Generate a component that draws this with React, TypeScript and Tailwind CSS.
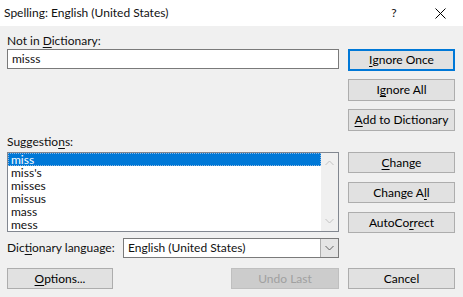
import React from "react";

const F = { fontFamily: 'Lato, "Noto Sans", sans-serif' };

function U({ children }: { children: React.ReactNode }) {
  return <span className="underline underline-offset-[2px] decoration-[1px]">{children}</span>;
}

function Btn({
  children,
  def,
  disabled,
  className = "",
}: {
  children: React.ReactNode;
  def?: boolean;
  disabled?: boolean;
  className?: string;
}) {
  const base = "flex items-center justify-center h-[21px] leading-none whitespace-nowrap";
  const look = def
    ? "bg-[#e1e1e1] border-2 border-[#0078d7] text-black"
    : disabled
    ? "bg-[#cccccc] border border-[#bfbfbf] text-[#a0a0a0]"
    : "bg-[#e1e1e1] border border-[#adadad] text-black";
  return <div className={`${base} ${look} ${className}`}>{children}</div>;
}

function Chevron({ up }: { up?: boolean }) {
  return (
    <svg width="9" height="6" viewBox="0 0 9 6">
      <path
        d={up ? "M0.5 5 L4.5 1 L8.5 5" : "M0.5 1 L4.5 5 L8.5 1"}
        fill="none"
        stroke="#c2c2c2"
        strokeWidth="1"
      />
    </svg>
  );
}

export default function App() {
  const items = ["miss", "miss's", "misses", "missus", "mass", "mess"];
  return (
    <div className="w-[463px] h-[297px] bg-[#f0f0f0] text-[#111] overflow-hidden text-[12px] whitespace-nowrap" style={F}>
      {/* Title bar */}
      <div className="h-[26px] bg-white flex items-center justify-between">
        <span className="pl-[4px] leading-none">Spelling: English (United States)</span>
        <div className="flex items-center h-full">
          <span className="w-[46px] text-center leading-none">?</span>
          <span className="w-[46px] flex justify-center">
            <svg width="11" height="11" viewBox="0 0 11 11">
              <path d="M0.5 0.5 L10.5 10.5 M10.5 0.5 L0.5 10.5" stroke="#000" strokeWidth="1" />
            </svg>
          </span>
        </div>
      </div>

      {/* Body */}
      <div className="px-[7px]">
        <div className="flex gap-[9px]">
          {/* Left column */}
          <div className="w-[332px] flex flex-col">
            <div className="mt-[7px] h-[16px] leading-[16px]">
              Not in <U>D</U>ictionary:
            </div>
            <div className="h-[20px] bg-white border border-[#7a7a7a] flex items-center pl-[4px]">
              misss
            </div>
            <div className="mt-[65px] h-[16px] leading-[16px]">
              Suggestio<U>n</U>s:
            </div>
            <div className="mt-[2px] h-[80px] bg-white border border-[#828790] flex">
              <div className="flex-1 flex flex-col">
                {items.map((it, i) => (
                  <div
                    key={it}
                    className={
                      i === 0
                        ? "h-[13px] leading-[13px] pl-[3px] bg-[#0078d7] text-white outline outline-1 outline-dotted outline-[#8fb8e0] -outline-offset-1"
                        : "h-[13px] leading-[13px] pl-[3px]"
                    }
                  >
                    {it}
                  </div>
                ))}
              </div>
              <div className="w-[17px] bg-[#f0f0f0] flex flex-col items-center justify-between py-[7px]">
                <Chevron up />
                <Chevron />
              </div>
            </div>
          </div>

          {/* Right column */}
          <div className="w-[107px] flex flex-col">
            <div className="mt-[23px] flex flex-col gap-[8px]">
              <Btn def className="h-[22px]">
                <U>I</U>gnore Once
              </Btn>
              <Btn className="h-[22px]">
                I<U>g</U>nore All
              </Btn>
              <Btn className="h-[22px]">
                <U>A</U>dd to Dictionary
              </Btn>
            </div>
            <div className="mt-[21px] flex flex-col gap-[9px]">
              <Btn>
                <U>C</U>hange
              </Btn>
              <Btn>
                Change A<U>l</U>l
              </Btn>
              <Btn>
                AutoCo<U>r</U>rect
              </Btn>
            </div>
          </div>
        </div>

        {/* Dictionary language row */}
        <div className="mt-[5px] w-[332px] flex items-center">
          <span className="w-[116px]">
            Dic<U>t</U>ionary language:
          </span>
          <div className="flex-1 h-[20px] bg-white border border-[#7a7a7a] flex items-center">
            <span className="flex-1 pl-[4px]">English (United States)</span>
            <div className="w-[18px] h-full bg-[#e5e5e5] border-l border-[#adadad] flex items-center justify-center">
              <svg width="9" height="6" viewBox="0 0 9 6">
                <path d="M0.5 1 L4.5 5 L8.5 1" fill="none" stroke="#606060" strokeWidth="1" />
              </svg>
            </div>
          </div>
        </div>

        {/* Bottom row */}
        <div className="mt-[10px] flex items-center">
          <Btn className="w-[106px]">
            <U>O</U>ptions...
          </Btn>
          <Btn disabled className="w-[108px] ml-[118px]">
            Undo Last
          </Btn>
          <Btn className="w-[107px] ml-[9px]">Cancel</Btn>
        </div>
      </div>
    </div>
  );
}
